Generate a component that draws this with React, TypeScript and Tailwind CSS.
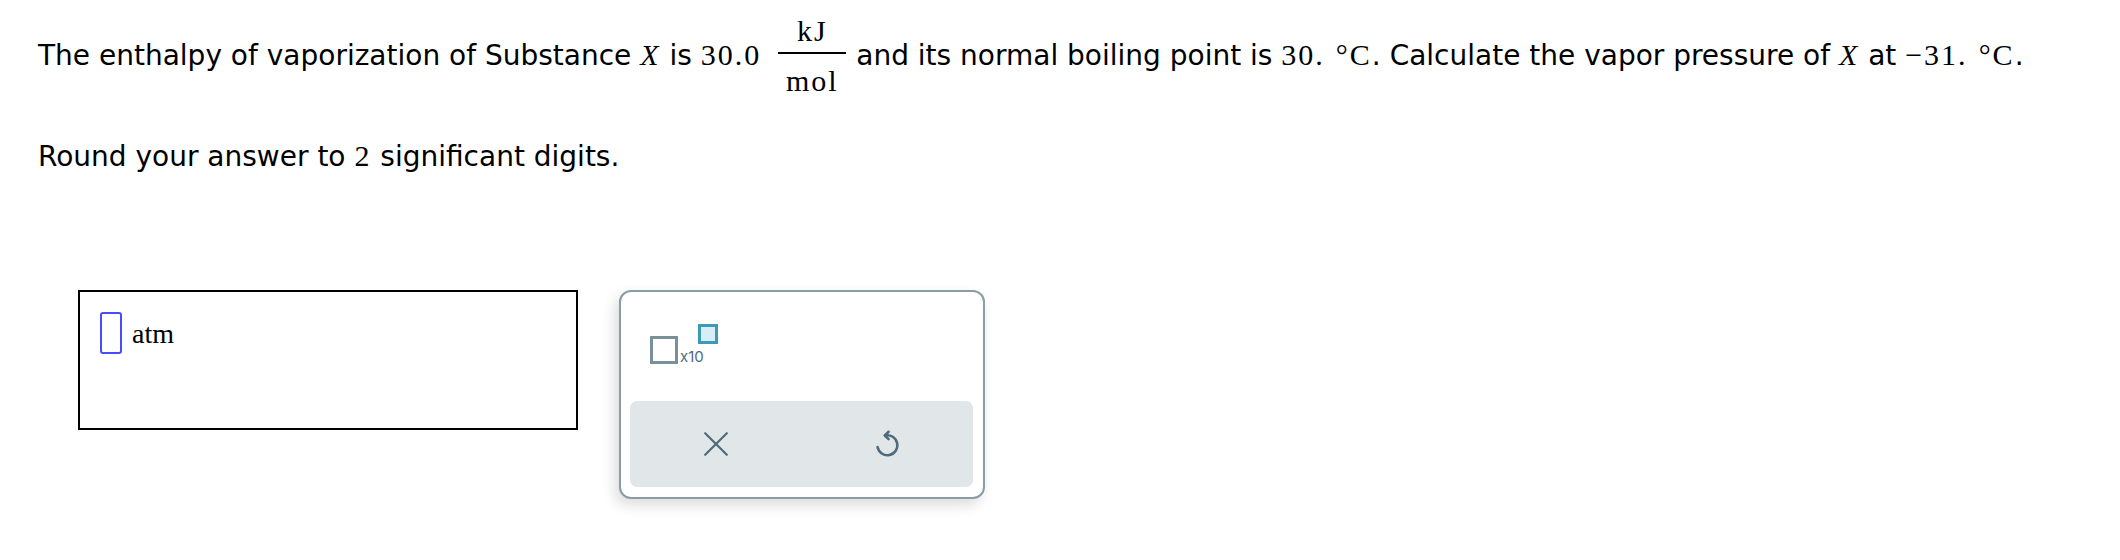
import React from 'react';

const serif = "font-['Liberation_Serif','Times_New_Roman',serif]";

function Frac({ num, den }: { num: string; den: string }) {
  return (
    <span className="inline-flex flex-col items-center align-[24px] ml-[17px] mr-[10px]">
      <span className={`${serif} text-[30px] tracking-[2px] leading-none mb-[6px]`}>{num}</span>
      <span className="block h-[2px] w-[68px] bg-black" />
      <span className={`${serif} text-[30px] tracking-[2px] leading-none mt-[12px]`}>{den}</span>
    </span>
  );
}

function M({ children, italic }: { children: React.ReactNode; italic?: boolean }) {
  return <span className={`${serif} text-[30px] tracking-[2px] ${italic ? 'italic' : ''}`}>{children}</span>;
}

// temperature like "30. °C" with the wider math space
function Temp({ value }: { value: string }) {
  return (
    <span className={`${serif} text-[30px] tracking-[2px]`}>
      {value}
      <span className="ml-[11px]">°C</span>
    </span>
  );
}

function UndoIcon() {
  return (
    <svg width="32" height="32" viewBox="0 0 24 24" fill="none" stroke="#4d6b78" strokeWidth="1.9" strokeLinecap="round" strokeLinejoin="round">
      <path d="M10.6 5.6 A7.5 7.5 0 1 1 4.9 14.3" />
      <path d="M13.2 2.8 L10.3 5.6 L13.2 8.4" />
    </svg>
  );
}

function XIcon() {
  return (
    <svg width="26" height="26" viewBox="0 0 24 24" fill="none" stroke="#4d6b78" strokeWidth="2" strokeLinecap="round">
      <path d="M2 2 L22 22" />
      <path d="M22 2 L2 22" />
    </svg>
  );
}

export default function App() {
  return (
    <div className="w-[2120px] h-[560px] bg-white text-black font-['DejaVu_Sans','Verdana',sans-serif] text-[28px] pl-[38px] pt-[16px]">
      <p className="whitespace-nowrap leading-[46px]">
        The enthalpy of vaporization of Substance <M italic>X</M> is <M>30.0</M>
        <Frac num="kJ" den="mol" />
        and its normal boiling point is <Temp value="30." />. Calculate the vapor pressure of <M italic>X</M> at <Temp value="−31." />.
      </p>

      <p className="mt-[42px] leading-[36px]">
        Round your answer to <M>2</M> significant digits.
      </p>

      <div className="mt-[115px] ml-[40px] flex items-start gap-[41px]">
        <div className="w-[500px] h-[140px] border-2 border-black flex items-start pt-[20px] pl-[20px] gap-[10px]">
          <span className="block w-[22px] h-[42px] border-2 border-[#4a4aff] rounded-[3px]" />
          <span className={`${serif} text-[28px] leading-[38px] mt-[3px]`}>atm</span>
        </div>

        <div className="w-[366px] h-[209px] border-2 border-[#8a9ca5] rounded-[12px] bg-white shadow-[-4px_6px_14px_rgba(0,0,0,0.14)] flex flex-col pl-[9px] pr-[10px] pb-[10px]">
          <div className="flex-1 flex items-start pt-[32px] pl-[20px]">
            <div className="relative flex items-end">
              <span className="block w-[28px] h-[28px] border-[3px] border-[#7a8f99] mt-[12px]" />
              <span className="font-['Inter',sans-serif] text-[15px] leading-none text-[#4d6b78] ml-[2px]">x10</span>
              <span className="absolute left-[48px] top-0 block w-[20px] h-[20px] border-[3px] border-[#3d9ab6] bg-[#d6eef5]" />
            </div>
          </div>
          <div className="h-[86px] bg-[#e1e6e8] rounded-[7px] flex items-center">
            <div className="flex-1 flex justify-center">
              <XIcon />
            </div>
            <div className="flex-1 flex justify-center">
              <UndoIcon />
            </div>
          </div>
        </div>
      </div>
    </div>
  );
}
